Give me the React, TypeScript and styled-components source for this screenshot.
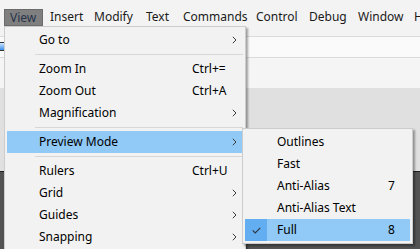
import React from "react";
import styled, { createGlobalStyle } from "styled-components";

const Global = createGlobalStyle`
  html, body { margin: 0; padding: 0; }
  body { font-family: "Noto Sans", "Open Sans", sans-serif; font-size: 12px; color: #000; }
`;

const Window = styled.div`
  position: relative;
  width: 420px;
  height: 249px;
  overflow: hidden;
  display: flex;
  flex-direction: column;
  background: #535353;
`;

const MenuBar = styled.div`
  height: 37px;
  flex: none;
  display: flex;
  align-items: flex-start;
  padding-top: 9px;
  box-sizing: border-box;
  background: #f3f3f3;
  border-bottom: 1px solid #dadada;
  padding-left: 4px;
  white-space: nowrap;
`;

const BarItem = styled.div<{ $w: number; $active?: boolean }>`
  flex: none;
  width: ${(p) => p.$w}px;
  height: 17px;
  line-height: 16px;
  box-sizing: border-box;
  padding-left: ${(p) => (p.$active ? 5 : 7)}px;
  color: ${(p) => (p.$active ? "#26334a" : "#1a1a1a")};
  background: ${(p) => (p.$active ? "#7f7f7f" : "transparent")};
  border: ${(p) => (p.$active ? "1px solid #6b6b6b" : "none")};
`;

const TabStrip = styled.div`
  height: 20px;
  flex: none;
  background: #fafafa;
  border-bottom: 1px solid #dadada;
  position: relative;
`;

const StripIcon = styled.div`
  position: absolute;
  left: -2px;
  top: 5px;
  width: 5px;
  height: 7px;
  background: linear-gradient(#cfe6ff, #3d8fe8);
  border: 1px solid #333;
`;

const Toolbar = styled.div`
  height: 30px;
  flex: none;
  background: #f5f5f5;
`;

const Stage = styled.div`
  height: 83px;
  flex: none;
  background: #e0e0e0;
`;

const Canvas = styled.div`
  flex: 1;
  background: #535353;
  border-top: 1px solid #1f1f1f;
`;

const Menu = styled.div<{ $left: number; $top: number; $width: number }>`
  position: absolute;
  left: ${(p) => p.$left}px;
  top: ${(p) => p.$top}px;
  width: ${(p) => p.$width}px;
  box-sizing: border-box;
  background: #f2f2f2;
  border: 1px solid #cccccc;
  padding: 2px;
  box-shadow: 2px 2px 2px rgba(0, 0, 0, 0.35);
`;

const Row = styled.div<{ $hl?: boolean; $shortcutAt: number }>`
  height: 22px;
  display: grid;
  grid-template-columns: 22px 10px ${(p) => p.$shortcutAt}px 1fr 22px;
  align-items: center;
  background: ${(p) => (p.$hl ? "#91c9f7" : "transparent")};
  white-space: nowrap;
`;

const Check = styled.div<{ $on?: boolean }>`
  height: 22px;
  display: flex;
  align-items: center;
  justify-content: center;
  background: ${(p) => (p.$on ? "#63aef0" : "transparent")};
`;

const Label = styled.span`
  grid-column: 3;
  line-height: 22px;
`;

const Shortcut = styled.span`
  grid-column: 4;
  line-height: 22px;
`;

const Arrow = styled.span`
  grid-column: 5;
  display: flex;
  align-items: center;
  padding-left: 11px;
`;

const Sep = styled.div`
  height: 7px;
  display: flex;
  align-items: center;
  padding-left: 28px;
  &::after {
    content: "";
    flex: 1;
    height: 1px;
    background: #d7d7d7;
  }
`;

const Chevron = () => (
  <svg width="5" height="8" viewBox="0 0 5 8">
    <path d="M0.8 0.8 L4 4 L0.8 7.2" fill="none" stroke="#3c3c3c" strokeWidth="1" />
  </svg>
);

const CheckMark = () => (
  <svg width="9" height="7" viewBox="0 0 9 7">
    <path d="M0.7 3.4 L3.2 5.9 L8.3 0.8" fill="none" stroke="#2e3440" strokeWidth="1.1" />
  </svg>
);

type Item =
  | { sep: true }
  | { label: string; shortcut?: string; sub?: boolean; hl?: boolean; checked?: boolean; sep?: false };

const mainItems: Item[] = [
  { label: "Go to", sub: true },
  { sep: true },
  { label: "Zoom In", shortcut: "Ctrl+=" },
  { label: "Zoom Out", shortcut: "Ctrl+A" },
  { label: "Magnification", sub: true },
  { sep: true },
  { label: "Preview Mode", sub: true, hl: true },
  { sep: true },
  { label: "Rulers", shortcut: "Ctrl+U" },
  { label: "Grid", sub: true },
  { label: "Guides", sub: true },
  { label: "Snapping", sub: true },
];

const subItems: Item[] = [
  { label: "Outlines" },
  { label: "Fast" },
  { label: "Anti-Alias", shortcut: "7" },
  { label: "Anti-Alias Text" },
  { label: "Full", shortcut: "8", hl: true, checked: true },
];

const bar: { label: string; w: number }[] = [
  { label: "View", w: 39 },
  { label: "Insert", w: 44 },
  { label: "Modify", w: 52 },
  { label: "Text", w: 37 },
  { label: "Commands", w: 73 },
  { label: "Control", w: 53 },
  { label: "Debug", w: 49 },
  { label: "Window", w: 56 },
  { label: "Help", w: 40 },
];

const MenuList = ({ items, shortcutAt }: { items: Item[]; shortcutAt: number }) => (
  <>
    {items.map((it, i) =>
      it.sep ? (
        <Sep key={i} />
      ) : (
        <Row key={i} $hl={it.hl} $shortcutAt={shortcutAt}>
          <Check $on={it.checked}>{it.checked && <CheckMark />}</Check>
          <Label>{it.label}</Label>
          {it.shortcut && <Shortcut>{it.shortcut}</Shortcut>}
          {it.sub && (
            <Arrow>
              <Chevron />
            </Arrow>
          )}
        </Row>
      )
    )}
  </>
);

export default function App() {
  return (
    <Window>
      <Global />
      <MenuBar>
        {bar.map((b, i) => (
          <BarItem key={b.label} $w={b.w} $active={i === 0}>
            {b.label}
          </BarItem>
        ))}
      </MenuBar>
      <TabStrip>
        <StripIcon />
      </TabStrip>
      <Toolbar />
      <Stage />
      <Canvas />
      <Menu $left={4} $top={26} $width={242}>
        <MenuList items={mainItems} shortcutAt={153} />
      </Menu>
      <Menu $left={242} $top={128} $width={171}>
        <MenuList items={subItems} shortcutAt={111} />
      </Menu>
    </Window>
  );
}
